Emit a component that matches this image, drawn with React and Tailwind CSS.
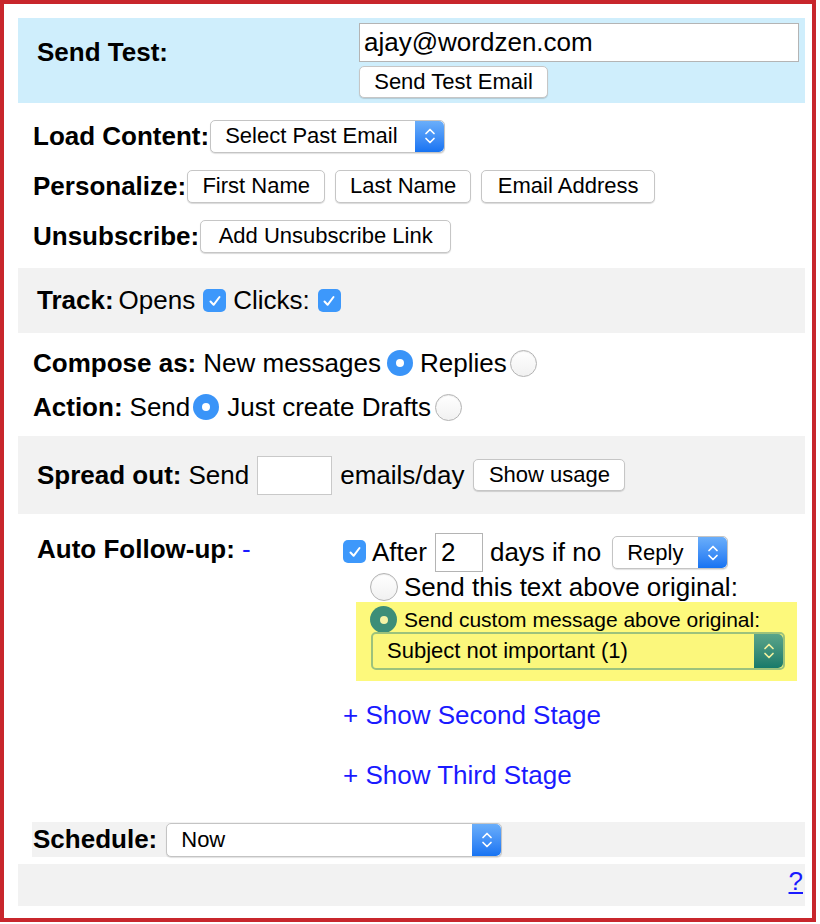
import React from "react";

const Stepper = ({ teal }) => (
  <div
    className={
      "flex w-[29px] self-stretch items-center justify-center rounded-r-[5px] " +
      (teal
        ? "bg-gradient-to-b from-[#5aa58a] to-[#167a6a]"
        : "bg-gradient-to-b from-[#6aaefa] to-[#1673f2]")
    }
  >
    <svg width="12" height="20" viewBox="0 0 12 20" fill="none">
      <path d="M2 7.5 L6 3.5 L10 7.5" stroke={teal ? "#f3f2a0" : "#fff"} strokeWidth="1.7" strokeLinecap="round" strokeLinejoin="round" />
      <path d="M2 12.5 L6 16.5 L10 12.5" stroke={teal ? "#f3f2a0" : "#fff"} strokeWidth="1.7" strokeLinecap="round" strokeLinejoin="round" />
    </svg>
  </div>
);

const Select = ({ children, className }) => (
  <div
    className={
      "flex items-center rounded-[5px] border border-[#c4c4c4] bg-white shadow-[0_1px_1px_rgba(0,0,0,0.12)] text-[22px] " +
      className
    }
  >
    <div className="flex-1 pl-[14px] leading-none">{children}</div>
    <Stepper />
  </div>
);

const Btn = ({ children, className }) => (
  <div
    className={
      "flex items-center justify-center rounded-[5px] border border-[#c6c6c6] bg-white text-[22px] leading-none shadow-[0_1px_1px_rgba(0,0,0,0.15)] " +
      className
    }
  >
    {children}
  </div>
);

const CheckBox = ({ className }) => (
  <div className={"flex h-[23px] w-[23px] items-center justify-center rounded-[5px] bg-[#3d98fb] " + (className || "")}>
    <svg width="14" height="14" viewBox="0 0 14 14" fill="none">
      <path d="M2.5 7.5 L5.6 10.8 L11.5 3" stroke="#fff" strokeWidth="2" strokeLinecap="round" strokeLinejoin="round" />
    </svg>
  </div>
);

const RadioOn = ({ className }) => (
  <div className={"flex h-[26px] w-[26px] items-center justify-center rounded-full bg-[#3a94f8] " + (className || "")}>
    <div className="h-[8px] w-[8px] rounded-full bg-white" />
  </div>
);

const RadioOff = ({ className }) => (
  <div
    className={
      "h-[27px] w-[27px] rounded-full border border-[#b3b3b3] bg-gradient-to-b from-white to-[#f1f1f1] shadow-[inset_0_1px_1px_rgba(0,0,0,0.08)] " +
      (className || "")
    }
  />
);

export default function App() {
  return (
    <div className="h-[924px] w-[820px] bg-white font-['Liberation_Sans',Arial,sans-serif] text-[26px] text-black">
      <div className="h-[922px] w-[816px] border-4 border-[#c8262c] p-[14px] pr-[7px]">
        {/* Send test */}
        <div className="flex h-[85px] bg-[#cfeefc]">
          <div className="w-[341px] pl-[19px] pt-[20px] font-bold leading-[29px]">Send Test:</div>
          <div className="flex flex-col pt-[5px]">
            <div className="flex h-[39px] w-[440px] items-center border border-[#b4b4b4] bg-white pl-[4px]">
              ajay@wordzen.com
            </div>
            <Btn className="mt-[4px] h-[32px] w-[189px]">Send Test Email</Btn>
          </div>
        </div>

        {/* Load / Personalize / Unsubscribe */}
        <div className="pb-[7px] pl-[15px] pt-[8px]">
          <div className="flex h-[50px] items-center">
            <span className="font-bold">Load Content:</span>
            <Select className="ml-[1px] h-[33px] w-[235px]">Select Past Email</Select>
          </div>
          <div className="flex h-[50px] items-center">
            <span className="font-bold">Personalize:</span>
            <Btn className="ml-[1px] h-[33px] w-[138px]">First Name</Btn>
            <Btn className="ml-[10px] h-[33px] w-[136px]">Last Name</Btn>
            <Btn className="ml-[10px] h-[33px] w-[174px]">Email Address</Btn>
          </div>
          <div className="flex h-[50px] items-center">
            <span className="font-bold">Unsubscribe:</span>
            <Btn className="ml-[1px] h-[33px] w-[251px]">Add Unsubscribe Link</Btn>
          </div>
        </div>

        {/* Track */}
        <div className="flex h-[65px] items-center bg-[#f2f2f2] pl-[19px]">
          <span className="font-bold">Track:</span>
          <span className="ml-[5px]">Opens</span>
          <CheckBox className="ml-[8px] mr-[7px]" />
          <span>Clicks:</span>
          <CheckBox className="ml-[8px]" />
        </div>

        {/* Compose / Action */}
        <div className="pb-[7px] pl-[15px] pt-[8px]">
          <div className="flex h-[44px] items-center">
            <span className="font-bold">Compose as:</span>
            <span className="ml-[7px]">New messages</span>
            <RadioOn className="ml-[6px]" />
            <span className="ml-[7px]">Replies</span>
            <RadioOff className="ml-[3px]" />
          </div>
          <div className="flex h-[44px] items-center">
            <span className="font-bold">Action:</span>
            <span className="ml-[7px]">Send</span>
            <RadioOn className="ml-[3px]" />
            <span className="ml-[8px]">Just create Drafts</span>
            <RadioOff className="ml-[4px]" />
          </div>
        </div>

        {/* Spread out */}
        <div className="flex h-[78px] items-center bg-[#f2f2f2] pl-[19px]">
          <span className="font-bold">Spread out:</span>
          <span className="ml-[7px]">Send</span>
          <div className="ml-[8px] h-[39px] w-[75px] border border-[#c9c9c9] bg-white" />
          <span className="ml-[8px]">emails/day</span>
          <Btn className="ml-[9px] h-[32px] w-[152px]">Show usage</Btn>
        </div>

        {/* Auto follow-up */}
        <div className="flex">
          <div className="w-[325px] pl-[19px] pt-[21px] leading-[29px]">
            <span className="font-bold">Auto Follow-up:</span>{" "}
            <span className="text-[#1a1aff]">-</span>
          </div>
          <div className="flex flex-col pt-[19px]">
            <div className="flex h-[39px] items-center">
              <CheckBox className="mt-[-2px]" />
              <span className="ml-[6px]">After</span>
              <div className="ml-[8px] flex h-[39px] w-[48px] items-center border border-[#b4b4b4] bg-white pl-[5px]">2</div>
              <span className="ml-[7px]">days if no</span>
              <Select className="ml-[11px] h-[33px] w-[116px]">Reply</Select>
            </div>
            <div className="flex h-[30px] items-center pl-[27px]">
              <RadioOff className="h-[28px] w-[28px]" />
              <span className="ml-[6px]">Send this text above original:</span>
            </div>
            <div className="ml-[13px] flex h-[79px] w-[441px] flex-col bg-[#fdf97c] pl-[14px] pt-[4px]">
              <div className="flex h-[27px] items-center">
                <div className="flex h-[27px] w-[27px] items-center justify-center rounded-full bg-[#3d8e78]">
                  <div className="h-[8px] w-[8px] rounded-full bg-[#f4f3a6]" />
                </div>
                <span className="ml-[7px] text-[21px]">Send custom message above original:</span>
              </div>
              <div className="ml-[1px] mt-[-1px] flex h-[38px] w-[414px] items-center rounded-[5px] border-2 border-[#9cc27c] bg-[#fbf77c] text-[22px]">
                <div className="flex-1 pl-[14px] leading-none">Subject not important (1)</div>
                <Stepper teal />
              </div>
            </div>
            <div className="mt-[19px] flex h-[30px] items-center text-[#1a1aff]">+ Show Second Stage</div>
            <div className="mt-[30px] flex h-[30px] items-center text-[#1a1aff]">+ Show Third Stage</div>
          </div>
        </div>

        {/* Schedule */}
        <div className="ml-[14px] mt-[32px] flex h-[35px] items-center bg-[#f2f2f2] pl-[1px]">
          <span className="font-bold">Schedule:</span>
          <Select className="ml-[9px] h-[34px] w-[336px]">Now</Select>
        </div>

        {/* Bottom */}
        <div className="mt-[7px] flex h-[42px] justify-end bg-[#f2f2f2] pr-[2px] pt-[3px]">
          <span className="leading-[29px] text-[#1a1aff] underline">?</span>
        </div>
      </div>
    </div>
  );
}
